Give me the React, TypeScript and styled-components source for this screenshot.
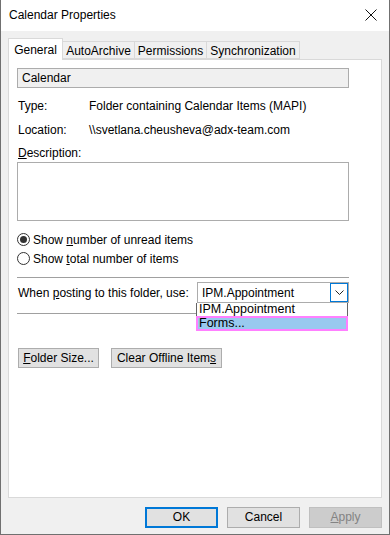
import React from 'react';
import styled, { createGlobalStyle } from 'styled-components';

const GlobalStyle = createGlobalStyle`
  html, body {
    margin: 0;
    padding: 0;
    background: #ffffff;
  }
  * {
    box-sizing: border-box;
  }
  body {
    font-family: "Liberation Sans", Arial, sans-serif;
    font-size: 12px;
    color: #000000;
  }
`;

const Window = styled.div`
  width: 390px;
  height: 535px;
  border: 1px solid #707070;
  border-top: none;
  background: #f0f0f0;
  display: flex;
  flex-direction: column;
`;

const TitleBar = styled.div`
  height: 31px;
  background: #ffffff;
  display: flex;
  align-items: center;
  justify-content: space-between;
  padding: 0 9px 1px 8px;
  font-size: 12px;
`;

const CloseButton = styled.div`
  width: 16px;
  height: 16px;
  display: flex;
  align-items: center;
  justify-content: center;
  margin-right: 1px;
`;

const Body = styled.div`
  flex: 1;
  display: flex;
  flex-direction: column;
  padding: 6px 7px 0 7px;
`;

const TabRow = styled.div`
  display: flex;
  align-items: flex-end;
  height: 22px;
  position: relative;
  z-index: 1;
`;

const Tab = styled.div<{ $active?: boolean }>`
  height: ${(p) => (p.$active ? '22px' : '18px')};
  margin-bottom: ${(p) => (p.$active ? '-1px' : '0')};
  padding: 0 ${(p) => (p.$active ? '8px' : '6px')};
  display: flex;
  align-items: center;
  justify-content: center;
  background: ${(p) => (p.$active ? '#ffffff' : '#f0f0f0')};
  border: 1px solid #d9d9d9;
  border-bottom: ${(p) => (p.$active ? 'none' : '1px solid #d9d9d9')};
  border-left: ${(p) => (p.$active ? '1px solid #d9d9d9' : 'none')};
  padding-top: ${(p) => (p.$active ? '0' : '1px')};
  width: ${(p) => p.$w}px;
`;

const Panel = styled.div`
  height: 439px;
  background: #ffffff;
  border: 1px solid #d9d9d9;
  padding: 8px 8px 0 8px;
  display: flex;
  flex-direction: column;
`;

const NameField = styled.div`
  width: 332px;
  height: 20px;
  background: #f0f0f0;
  border: 1px solid #acacac;
  display: flex;
  align-items: center;
  padding: 0 0 1px 4px;
`;

const InfoRow = styled.div<{ $first?: boolean }>`
  height: 24px;
  margin-top: ${(p) => (p.$first ? '6px' : '0')};
  display: flex;
  align-items: center;
  padding-left: 1px;
`;

const InfoLabel = styled.span`
  width: 71px;
`;

const Label = styled.div`
  height: 18px;
  margin-top: 2px;
  display: flex;
  align-items: center;
  padding-left: 1px;
`;

const TextArea = styled.div`
  width: 332px;
  height: 59px;
  border: 1px solid #acacac;
  background: #ffffff;
`;

const RadioRow = styled.div<{ $first?: boolean }>`
  height: 19px;
  margin-top: ${(p) => (p.$first ? '9px' : '0')};
  display: flex;
  align-items: center;
  gap: 3px;
`;

const RadioCircle = styled.div<{ $checked?: boolean }>`
  width: 13px;
  height: 13px;
  border-radius: 50%;
  border: 1px solid #333333;
  background: #ffffff;
  display: flex;
  align-items: center;
  justify-content: center;

  &::after {
    content: '';
    display: ${(p) => (p.$checked ? 'block' : 'none')};
    width: 7px;
    height: 7px;
    border-radius: 50%;
    background: #333333;
  }
`;

const Separator = styled.div<{ $top: number; $w?: number }>`
  width: ${(p) => p.$w ?? 332}px;
  height: 1px;
  background: #a0a0a0;
  margin-top: ${(p) => p.$top}px;
`;

const ComboRow = styled.div`
  width: 332px;
  height: 21px;
  margin-top: 4px;
  display: flex;
  align-items: center;
  padding-left: 1px;
  position: relative;
`;

const Combo = styled.div`
  margin-left: auto;
  width: 152px;
  height: 21px;
  border: 1px solid #acacac;
  background: #ffffff;
  display: flex;
  align-items: center;
  padding-left: 4px;
  position: relative;
`;

const DropButton = styled.div`
  position: absolute;
  right: 0;
  top: 0;
  width: 18px;
  height: 19px;
  border: 1px solid #0078d7;
  background: #ffffff;
  display: flex;
  align-items: center;
  justify-content: center;
`;

const DropList = styled.div`
  position: absolute;
  right: 0;
  top: 20px;
  width: 152px;
  border: 1px solid #646464;
  border-top: none;
  background: #ffffff;
  z-index: 2;
`;

const DropItem = styled.div<{ $highlight?: boolean }>`
  height: ${(p) => (p.$highlight ? '15px' : '13px')};
  display: flex;
  align-items: center;
  padding-left: ${(p) => (p.$highlight ? '1px' : '2px')};
  background: ${(p) => (p.$highlight ? '#99c9ef' : '#ffffff')};
  border: ${(p) => (p.$highlight ? '2px solid #ff80ff' : 'none')};
  margin: ${(p) => (p.$highlight ? '0 -1px -1px -1px' : '0')};
  line-height: 1;
  font-size: 12.5px;
`;

const ButtonRow = styled.div`
  display: flex;
  gap: 12px;
  margin-top: 34px;
  padding-left: 1px;
`;

const Button = styled.div<{ $w: number; $primary?: boolean; $disabled?: boolean }>`
  width: ${(p) => p.$w}px;
  height: 20px;
  display: flex;
  align-items: center;
  justify-content: center;
  background: ${(p) => (p.$disabled ? '#cccccc' : '#e1e1e1')};
  border: ${(p) =>
    p.$primary ? '2px solid #0078d7' : p.$disabled ? '1px solid #bfbfbf' : '1px solid #adadad'};
  color: ${(p) => (p.$disabled ? '#838383' : '#000000')};
  padding-bottom: 1px;
`;

const Footer = styled.div`
  display: flex;
  justify-content: flex-end;
  gap: 9px;
  padding-top: 9px;
`;

const FooterButton = styled(Button)`
  height: 21px;
`;

export default function App() {
  return (
    <>
      <GlobalStyle />
      <Window>
        <TitleBar>
          <span>Calendar Properties</span>
          <CloseButton>
            <svg width="12" height="12" viewBox="0 0 12 12">
              <path d="M0.5 0.5 L11.5 11.5 M11.5 0.5 L0.5 11.5" stroke="#111" strokeWidth="1" />
            </svg>
          </CloseButton>
        </TitleBar>
        <Body>
          <TabRow>
            <Tab $active $w={55}>General</Tab>
            <Tab $w={72}>AutoArchive</Tab>
            <Tab $w={72}>Permissions</Tab>
            <Tab $w={93}>Synchronization</Tab>
          </TabRow>
          <Panel>
            <NameField>Calendar</NameField>
            <InfoRow $first>
              <InfoLabel>Type:</InfoLabel>
              <span>Folder containing Calendar Items (MAPI)</span>
            </InfoRow>
            <InfoRow>
              <InfoLabel>Location:</InfoLabel>
              <span>\\svetlana.cheusheva@adx-team.com</span>
            </InfoRow>
            <Label>
              <span><u>D</u>escription:</span>
            </Label>
            <TextArea />
            <RadioRow $first>
              <RadioCircle $checked />
              <span>Show <u>n</u>umber of unread items</span>
            </RadioRow>
            <RadioRow>
              <RadioCircle />
              <span>Show <u>t</u>otal number of items</span>
            </RadioRow>
            <Separator $top={9} />
            <ComboRow>
              <span>When <u>p</u>osting to this folder, use:</span>
              <Combo>
                IPM.Appointment
                <DropButton>
                  <svg width="9" height="6" viewBox="0 0 9 6">
                    <path d="M0.5 0.5 L4.5 4.5 L8.5 0.5" stroke="#222" strokeWidth="1" fill="none" />
                  </svg>
                </DropButton>
                <DropList>
                  <DropItem>IPM.Appointment</DropItem>
                  <DropItem $highlight>Forms...</DropItem>
                </DropList>
              </Combo>
            </ComboRow>
            <Separator $top={10} $w={180} />
            <ButtonRow>
              <Button $w={81}><span><u>F</u>older Size...</span></Button>
              <Button $w={111}><span>Clear Offline Item<u>s</u></span></Button>
            </ButtonRow>
          </Panel>
          <Footer>
            <FooterButton $w={73} $primary>OK</FooterButton>
            <FooterButton $w={73}>Cancel</FooterButton>
            <FooterButton $w={73} $disabled><span><u>A</u>pply</span></FooterButton>
          </Footer>
        </Body>
      </Window>
    </>
  );
}
